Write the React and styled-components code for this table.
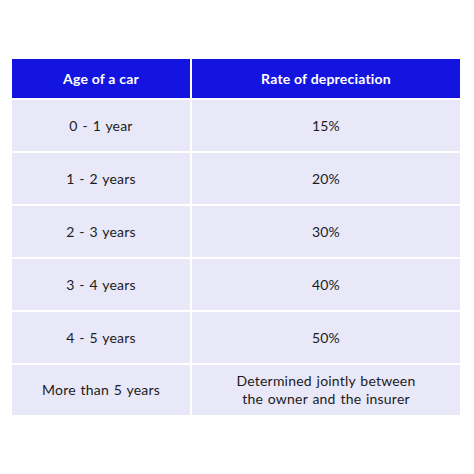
import React from 'react'
import styled, { createGlobalStyle } from 'styled-components'

const rows = [
  ['0 - 1 year', '15%'],
  ['1 - 2 years', '20%'],
  ['2 - 3 years', '30%'],
  ['3 - 4 years', '40%'],
  ['4 - 5 years', '50%'],
  ['More than 5 years', 'Determined jointly between\nthe owner and the insurer'],
]

const GlobalStyle = createGlobalStyle`
  body {
    margin: 0;
    background: #ffffff;
    font-family: Lato, "Liberation Sans", sans-serif;
  }
`

const Page = styled.div`
  width: 474px;
  height: 474px;
  padding: 59px 14px 0 12px;
  box-sizing: border-box;
`

const Table = styled.div`
  display: grid;
  grid-template-columns: 178px 268px;
  grid-template-rows: 39px repeat(5, 51px) 50px;
  gap: 2px;
`

const Cell = styled.div`
  display: flex;
  align-items: center;
  justify-content: center;
  text-align: center;
  white-space: pre-line;
  background: ${p => (p.$head ? '#1414e0' : '#e8e8f9')};
  color: ${p => (p.$head ? '#ffffff' : '#1c1c1c')};
  font-size: 14px;
  font-weight: ${p => (p.$head ? 700 : 400)};
  line-height: 18px;
  letter-spacing: 0.2px;
  word-spacing: ${p => (p.$head ? '0' : '1px')};
`

const App = () => (
  <>
    <GlobalStyle />
    <Page>
      <Table>
        <Cell $head>Age of a car</Cell>
        <Cell $head>Rate of depreciation</Cell>
        {rows.map(([age, rate]) => (
          <React.Fragment key={age}>
            <Cell>{age}</Cell>
            <Cell>{rate}</Cell>
          </React.Fragment>
        ))}
      </Table>
    </Page>
  </>
)

export default App
